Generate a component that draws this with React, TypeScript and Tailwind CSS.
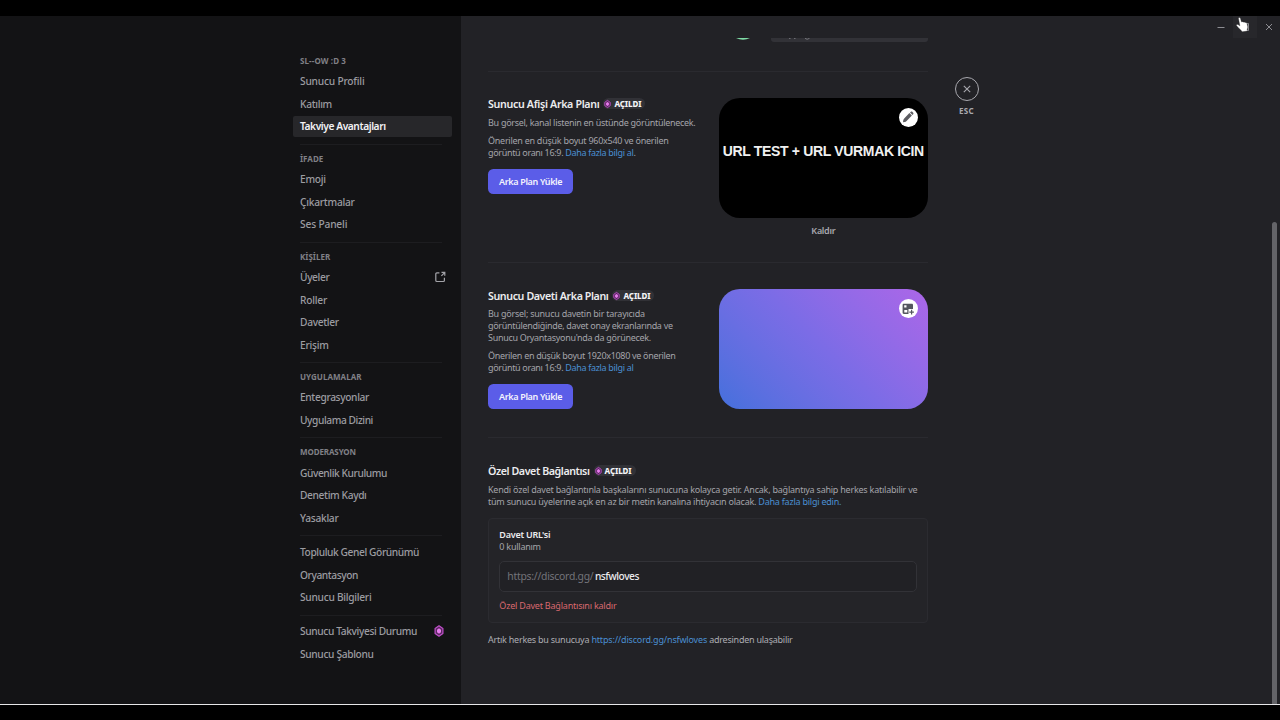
import type { ReactNode } from 'react';
import clsx from 'clsx';

interface NavItem {
  label: string;
  tracking: string;
  active?: boolean;
  icon?: 'external' | 'boost';
}

interface NavSection {
  title?: string;
  tracking?: string;
  items: NavItem[];
}

const sections: NavSection[] = [
  {
    title: 'SL--OW :D 3',
    tracking: 'tracking-[0.11px]',
    items: [
      { label: 'Sunucu Profili', tracking: 'tracking-[-0.2px]' },
      { label: 'Katılım', tracking: 'tracking-[-0.3px]' },
      { label: 'Takviye Avantajları', tracking: 'tracking-[-0.42px]', active: true },
    ],
  },
  {
    title: 'İFADE',
    items: [
      { label: 'Emoji', tracking: 'tracking-[-0.27px]' },
      { label: 'Çıkartmalar', tracking: 'tracking-[-0.24px]' },
      { label: 'Ses Paneli', tracking: 'tracking-[-0.16px]' },
    ],
  },
  {
    title: 'KİŞİLER',
    items: [
      { label: 'Üyeler', tracking: 'tracking-[-0.39px]', icon: 'external' },
      { label: 'Roller', tracking: 'tracking-[-0.22px]' },
      { label: 'Davetler', tracking: 'tracking-[-0.32px]' },
      { label: 'Erişim', tracking: 'tracking-[-0.26px]' },
    ],
  },
  {
    title: 'UYGULAMALAR',
    tracking: 'tracking-[0.04px]',
    items: [
      { label: 'Entegrasyonlar', tracking: 'tracking-[-0.35px]' },
      { label: 'Uygulama Dizini', tracking: 'tracking-[-0.42px]' },
    ],
  },
  {
    title: 'MODERASYON',
    tracking: 'tracking-[-0.11px]',
    items: [
      { label: 'Güvenlik Kurulumu', tracking: 'tracking-[-0.41px]' },
      { label: 'Denetim Kaydı', tracking: 'tracking-[-0.36px]' },
      { label: 'Yasaklar', tracking: 'tracking-[-0.27px]' },
    ],
  },
  {
    items: [
      { label: 'Topluluk Genel Görünümü', tracking: 'tracking-[-0.4px]' },
      { label: 'Oryantasyon', tracking: 'tracking-[-0.42px]' },
      { label: 'Sunucu Bilgileri', tracking: 'tracking-[-0.27px]' },
    ],
  },
  {
    items: [
      { label: 'Sunucu Takviyesi Durumu', tracking: 'tracking-[-0.37px]', icon: 'boost' },
      { label: 'Sunucu Şablonu', tracking: 'tracking-[-0.34px]' },
    ],
  },
];

function ExternalIcon() {
  return (
    <svg viewBox="0 0 12 12" className="h-3 w-3" fill="none" stroke="#a3a3a8" strokeWidth="1.2">
      <path d="M5.4 1.9H2.8a1 1 0 0 0-1 1v6.6a1 1 0 0 0 1 1h6.6a1 1 0 0 0 1-1V6.8" />
      <path d="M7.5 1.4h3.3v3.3M10.6 1.6 7.4 4.8" />
    </svg>
  );
}

function BoostIcon({ className }: { className?: string }) {
  return (
    <svg viewBox="0 0 10 12" className={className} fill="none">
      <path
        d="M5 .8 8.9 3.6v4.8L5 11.2 1.1 8.4V3.6z"
        fill="#5a2860"
        stroke="#c04fca"
        strokeWidth="1.2"
        strokeLinejoin="round"
      />
      <path d="M5 3.3 7 4.7v2.6L5 8.7 3 7.3V4.7z" fill="#e87cee" />
    </svg>
  );
}

function Sidebar() {
  return (
    <aside className="flex w-[461px] shrink-0 justify-end bg-[#131315] pr-[9px]">
      <nav className="w-[159px] pt-[35.67px]">
        {sections.map((section, i) => (
          <div key={i}>
            {i > 0 && <div className="mt-[6.67px] mr-2.5 mb-[5.33px] ml-[7px] h-[0.67px] bg-[#1d1d20]" />}
            {section.title && (
              <h2
                className={clsx(
                  'h-[18.67px] pl-[7px] text-[8px] leading-[18.67px] font-bold text-[#808086]',
                  section.tracking
                )}
              >
                {section.title}
              </h2>
            )}
            {section.items.map(item => (
              <div
                key={item.label}
                className={clsx(
                  'mb-[1.33px] flex h-[21.33px] items-center justify-between rounded-[2px] pl-[7px] text-[10.2px] whitespace-nowrap',
                  item.tracking,
                  item.active ? 'bg-[#27272a] font-semibold text-[#f2f2f4]' : 'font-medium text-[#9c9ca1]',
                  item.icon === 'boost' ? 'pr-2' : 'pr-1.5'
                )}
              >
                <span className="pt-[1.33px]">{item.label}</span>
                {item.icon === 'external' && <ExternalIcon />}
                {item.icon === 'boost' && <BoostIcon className="h-3 w-2.5" />}
              </div>
            ))}
          </div>
        ))}
      </nav>
    </aside>
  );
}

function PerkTitle({ tracking, children }: { tracking: string; children: ReactNode }) {
  return (
    <h3 className="flex h-[13.33px] items-center text-[10.67px] font-semibold whitespace-nowrap text-[#ececee]">
      <span className={tracking}>{children}</span>
      <span className="ml-1 flex h-[11px] items-center rounded-full bg-[#313136] pr-1 pl-px">
        <BoostIcon className="h-[10px] w-[7px]" />
        <span className="ml-[3px] text-[8px] leading-[11px] font-extrabold tracking-[-0.12px] text-[#f4f4f6]">
          AÇILDI
        </span>
      </span>
    </h3>
  );
}

function UploadButton() {
  return (
    <button className="mt-[10.33px] flex h-[25.33px] w-[85.33px] items-center justify-center rounded-[5.33px] bg-[#5b5de8] pt-px text-[9px] font-semibold tracking-[-0.34px] text-[#f4f4fd]">
      Arka Plan Yükle
    </button>
  );
}

function Link({ children }: { children: ReactNode }) {
  return <span className="text-[#4a8fd2]">{children}</span>;
}

function Divider() {
  return <div className="h-[0.67px] bg-[#2a2a2f]" />;
}

function RoundAction({ children }: { children: ReactNode }) {
  return (
    <span className="absolute top-[10px] right-[10.5px] flex h-[19px] w-[19px] items-center justify-center rounded-full bg-white">
      {children}
    </span>
  );
}

function WindowControls() {
  return (
    <div className="absolute top-0 right-0 flex h-[22px] text-[#8d8d92]">
      <div className="flex w-6 items-center justify-center">
        <svg viewBox="0 0 8 8" className="h-2 w-2" stroke="currentColor">
          <path d="M.5 4.5h7" />
        </svg>
      </div>
      <div className="flex w-6 items-center justify-center bg-[#27272b]">
        <svg viewBox="0 0 8 8" className="h-2 w-2" fill="none" stroke="currentColor">
          <path d="M.5.5h7v7h-7z" />
        </svg>
      </div>
      <div className="flex w-[23px] items-center justify-center">
        <svg viewBox="0 0 8 8" className="h-2 w-2" stroke="currentColor">
          <path d="m1 1 6 6M7 1 1 7" />
        </svg>
      </div>
    </div>
  );
}

function HandCursor() {
  return (
    <svg viewBox="0 0 13 15" className="absolute top-[17px] left-[1236px] h-[15px] w-[13px]">
      <path
        d="M2.4 1C2.6.2 4 .2 4.3 1.1L5.500 5c.8-.6 1.600-.3 1.800.2.700-.4 1.500-.2 1.700.4.800-.3 1.700 0 2 .9l.7 3c.2 1-.1 2-.5 2.700l.1 1.900-5.300.700-.4-1L2.900 11.300.600 8.700c-.6-.9.400-1.700 1.300-1.100l2 1.200z"
        fill="#fff"
        stroke="#222"
        strokeWidth=".3"
      />
    </svg>
  );
}

export default function App() {
  return (
    <div className="relative h-[720px] w-[1280px] overflow-hidden bg-black pt-4 font-['Noto_Sans',sans-serif]">
      <div className="relative flex h-[689px] border-b border-[#e6e6e8] bg-[#222226]">
        <Sidebar />

        <main className="ml-[27px] w-[440px] pt-[22px] text-[9px] leading-[12px] whitespace-nowrap text-[#a4a4aa]">
          {/* bottom edge of the row scrolled under the title bar */}
          <div className="flex h-1 items-start justify-end overflow-hidden">
            <svg viewBox="0 0 14 2" className="mr-[21px] h-0.5 w-3.5">
              <path d="M0 0h14Q7 3.5 0 0z" fill="#7fdca6" />
            </svg>
            <div className="h-[3.5px] w-[157px] rounded-b-[3px] bg-[#323237] pl-[17px]">
              <svg viewBox="0 0 24 3" className="h-[3px] w-6" fill="none" stroke="#74747a">
                <path d="M1 .4h1.500M6 .4h1.500M17 .300q2 2 4.500 0" />
              </svg>
            </div>
          </div>

          <div className="mt-[28.67px]">
            <Divider />
          </div>

          <section className="flex h-[190.67px] justify-between pt-[26.67px]">
            <div>
              <div className="-mt-[0.67px]">
                <PerkTitle tracking="tracking-[-0.33px]">Sunucu Afişi Arka Planı</PerkTitle>
              </div>
              <p className="mt-[6.67px] tracking-[-0.29px]">Bu görsel, kanal listenin en üstünde görüntülenecek.</p>
              <p className="mt-[5.33px] tracking-[-0.26px]">
                Önerilen en düşük boyut 960x540 ve önerilen
                <br />
                <span className="tracking-[-0.33px]">
                  görüntü oranı 16:9. <Link>Daha fazla bilgi al</Link>.
                </span>
              </p>
              <UploadButton />
            </div>
            <div className="w-[209.33px] text-center">
              <div className="relative flex h-[120px] items-center justify-center rounded-[21px] bg-black pb-[13px] font-['Liberation_Sans',sans-serif] text-[14px] font-bold tracking-[-0.34px] text-[#f0f0f0]">
                URL TEST + URL VURMAK ICIN
                <RoundAction>
                  <svg viewBox="0 0 12 12" className="h-3 w-3" fill="#5c5c61">
                    <path d="m8 1.5.8-.7c.5-.4 1-.4 1.5 0l.9.9c.4.5.4 1 0 1.5l-.7.8zM7.4 2.1l2.5 2.5-5.3 5.3c-.5.5-1.2.9-1.9 1L1 11.2l.2-1.8c.1-.7.5-1.3 1-1.9z" />
                  </svg>
                </RoundAction>
              </div>
              <button className="mt-[6.67px] block w-full font-semibold tracking-[-0.29px] text-[#a8a8ae]">Kaldır</button>
            </div>
          </section>

          <Divider />

          <section className="flex h-[174.67px] justify-between pt-[26.67px]">
            <div>
              <PerkTitle tracking="tracking-[-0.4px]">Sunucu Daveti Arka Planı</PerkTitle>
              <p className="mt-[5.67px] tracking-[-0.31px]">
                <span className="tracking-[-0.25px]">Bu görsel; sunucu davetin bir tarayıcıda</span>
                <br />
                görüntülendiğinde, davet onay ekranlarında ve
                <br />
                Sunucu Oryantasyonu'nda da görünecek.
              </p>
              <p className="mt-[5.33px] tracking-[-0.32px]">
                Önerilen en düşük boyut 1920x1080 ve önerilen
                <br />
                <span className="tracking-[-0.33px]">
                  görüntü oranı 16:9. <Link>Daha fazla bilgi al</Link>
                </span>
              </p>
              <UploadButton />
            </div>
            <div className="relative h-[119.67px] w-[209.33px] rounded-[21px] bg-linear-45 from-[#4470dc] via-[#7b6ce6] to-[#ac66e8]">
              <RoundAction>
                <svg viewBox="0 0 12 12" className="h-3 w-3" fill="#54565e">
                  <path
                    fillRule="evenodd"
                    d="M1.8.8h8c.7 0 1.2.5 1.2 1.2v4H6.5v5H1.8C1.1 11 .6 10.5.6 9.8V2C.6 1.3 1.1.8 1.8.8zm.4 1.5v2.2h2.300V2.300zM2.300 7v2.400h3V7z"
                  />
                  <path d="M9 6.800h1.200v1.700h1.700v1.200h-1.700v1.700H9V9.700H7.300V8.500H9z" />
                </svg>
              </RoundAction>
            </div>
          </section>

          <Divider />

          <section className="pt-[26.33px]">
            <PerkTitle tracking="tracking-[-0.42px]">Özel Davet Bağlantısı</PerkTitle>
            <p className="mt-1.5 tracking-[-0.23px]">
              Kendi özel davet bağlantınla başkalarını sunucuna kolayca getir. Ancak, bağlantıya sahip herkes katılabilir ve
              <br />
              tüm sunucu üyelerine açık en az bir metin kanalına ihtiyacın olacak. <Link>Daha fazla bilgi edin.</Link>
            </p>
            <div className="mt-[10.33px] h-[104.67px] rounded-[4px] border border-[#2b2b30] bg-[#242428] px-[10.33px] pt-[10.33px]">
              <p className="font-semibold tracking-[-0.22px] text-[#ececee]">Davet URL'si</p>
              <p className="tracking-[-0.24px]">0 kullanım</p>
              <div className="mt-[7.67px] flex h-[31px] items-center rounded-[5px] border border-[#323237] bg-[#212125] px-[7px]">
                <span className="text-[10.4px] tracking-[-0.26px] text-[#74747a]">https://discord.gg/</span>
                <span className="ml-[1.5px] text-[10.2px] font-medium tracking-[-0.46px] text-[#ececee]">nsfwloves</span>
              </div>
              <button className="mt-[8px] block tracking-[-0.21px] text-[#d8686e]">Özel Davet Bağlantısını kaldır</button>
            </div>
            <p className="mt-[11px] tracking-[-0.24px] text-[#adadb3]">
              Artık herkes bu sunucuya{' '}
              <span className="tracking-[-0.17px]">
                <Link>https://discord.gg/nsfwloves</Link>
              </span>{' '}
              adresinden ulaşabilir
            </p>
          </section>
        </main>

        <div className="mt-[61px] ml-[26.5px] flex w-6 flex-col items-center text-[#a8a8ae]">
          <div className="flex h-6 w-6 items-center justify-center rounded-full border-[1.3px] border-[#a8a8ae]">
            <svg viewBox="0 0 8 8" className="h-2 w-2" stroke="currentColor" strokeWidth="1.1">
              <path d="m.8.8 6.4 6.4M7.2.8.8 7.2" />
            </svg>
          </div>
          <span className="mt-1 text-[8px] leading-[12px] font-bold tracking-[0.32px]">ESC</span>
        </div>

        <WindowControls />
        <div className="absolute right-[3px] bottom-0 h-[482px] w-[5px] rounded-t-full bg-[#646468]" />
      </div>
      <HandCursor />
    </div>
  );
}
